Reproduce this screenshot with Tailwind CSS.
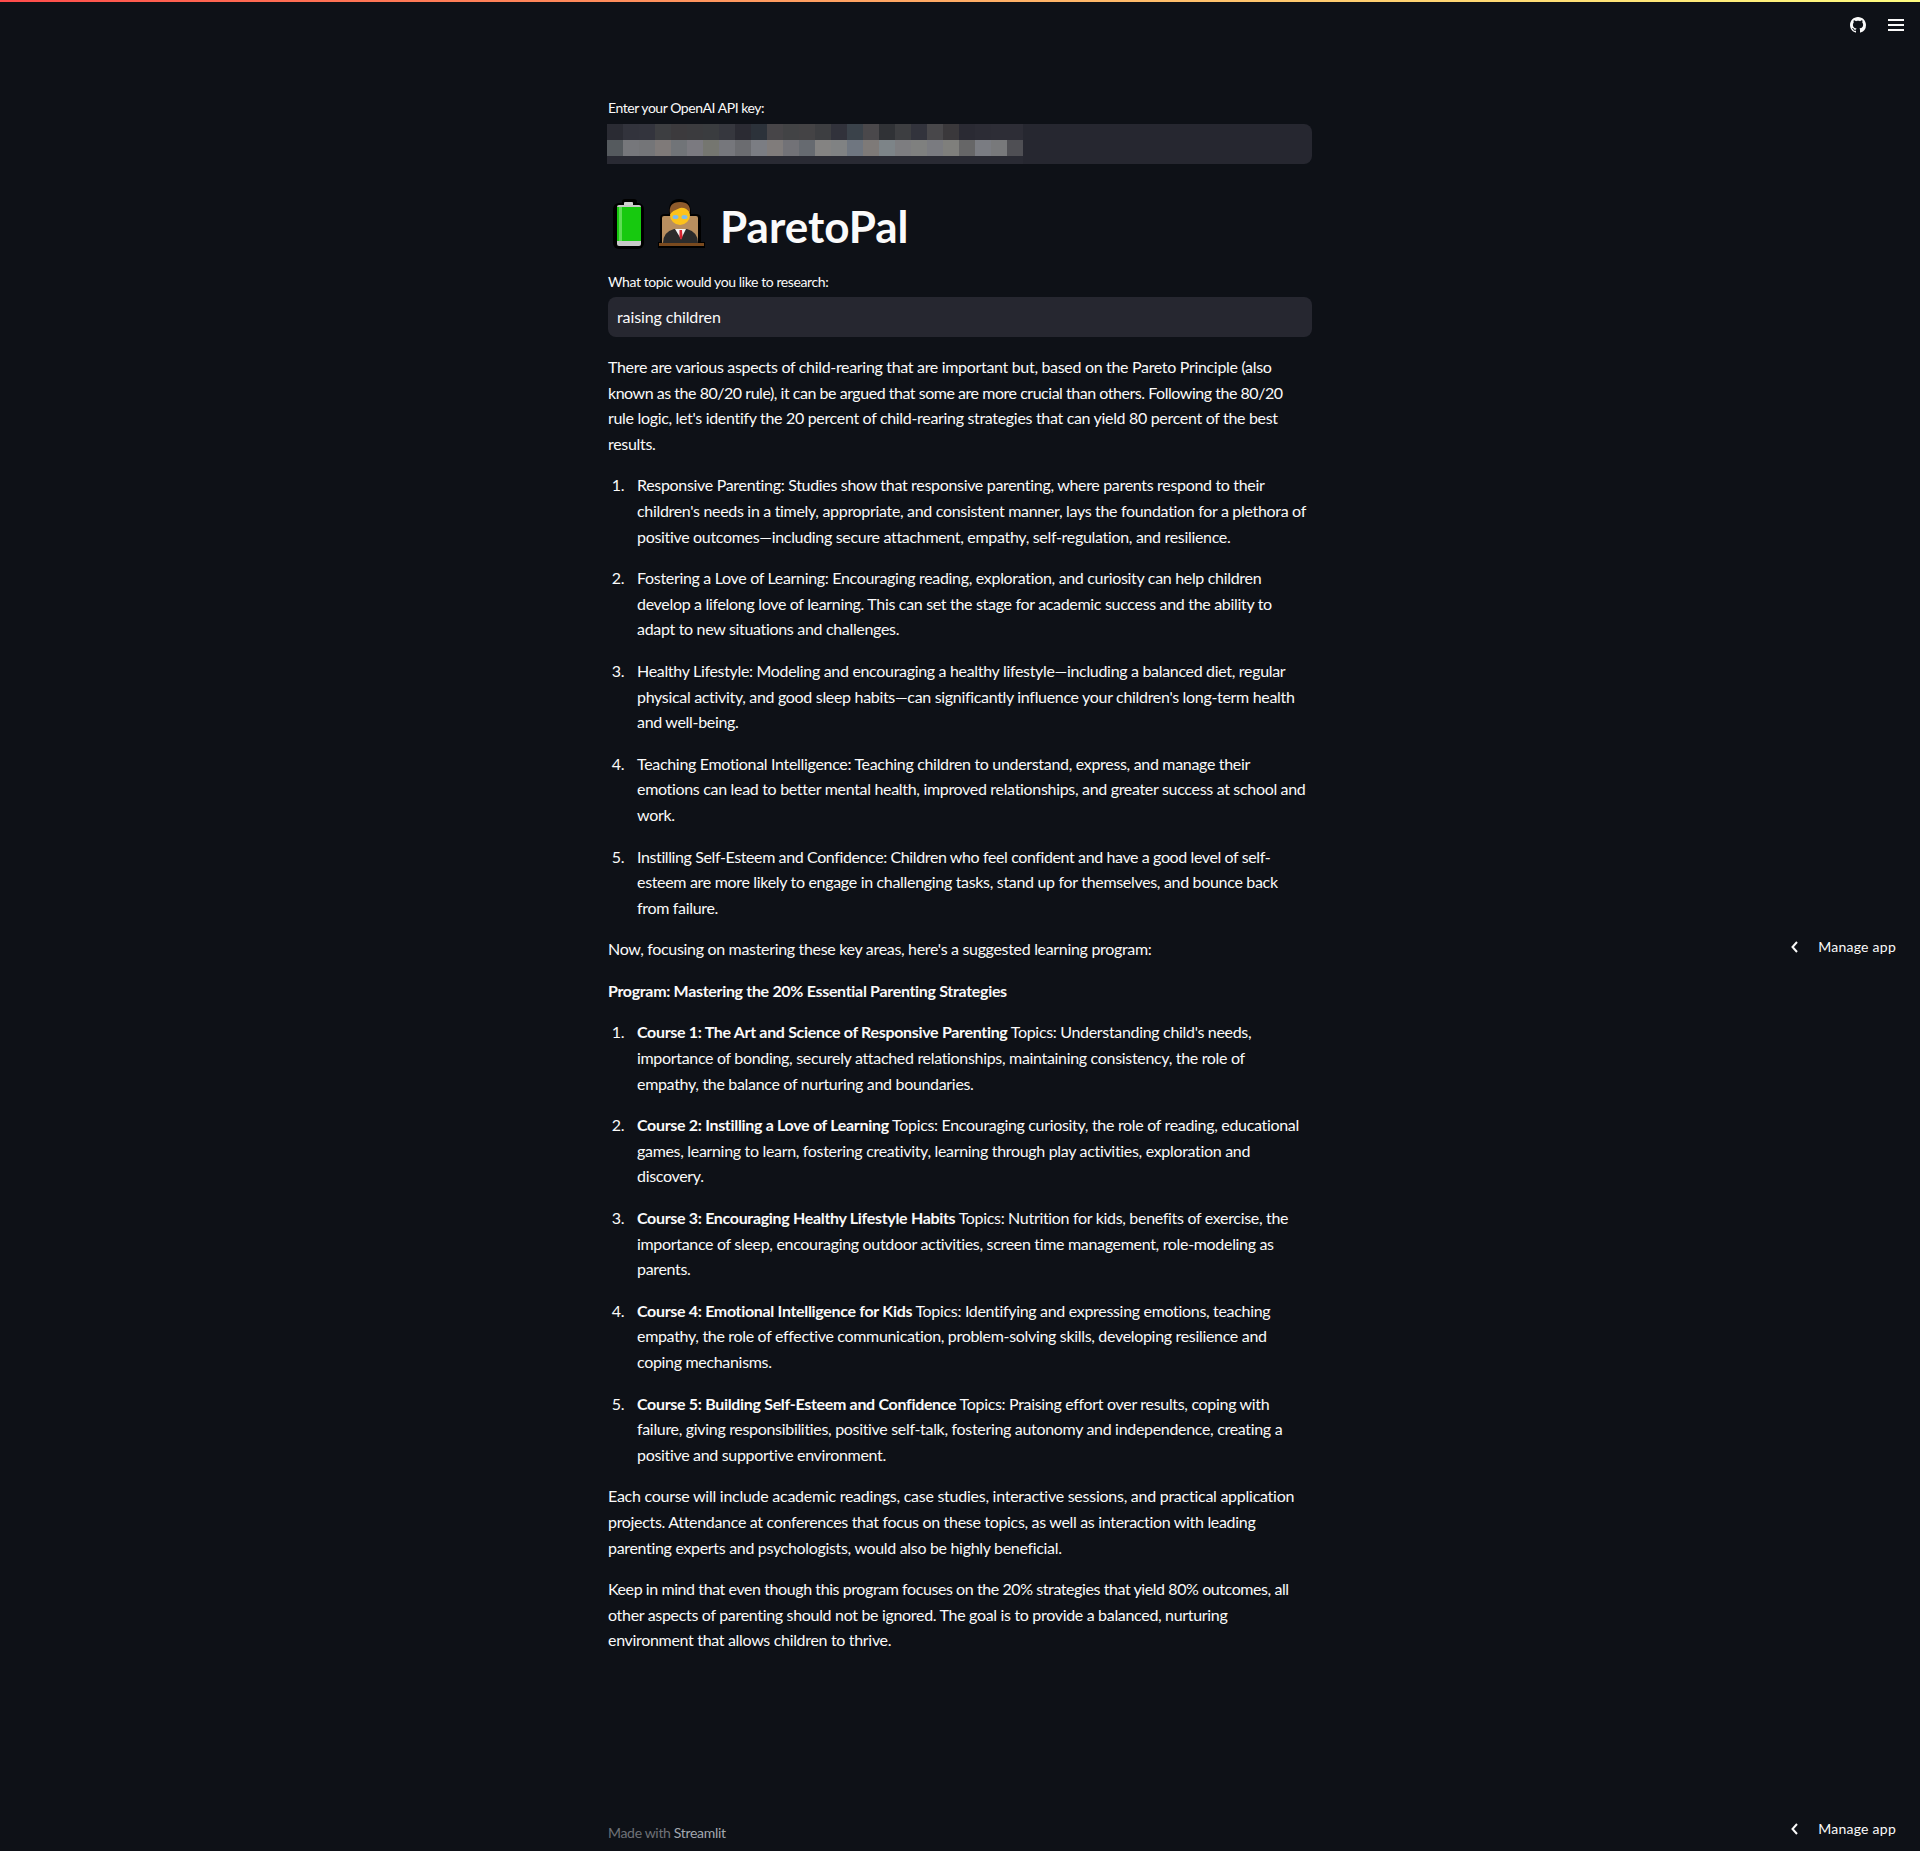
<!DOCTYPE html>
<html lang="en">
<head>
    <meta charset="UTF-8">
    <meta name="viewport" content="width=device-width, initial-scale=1.0">
    <title>ParetoPal</title>
    <script src="https://cdn.jsdelivr.net/npm/@tailwindcss/browser@4"></script>
</head>
<body class="bg-[#0e1117] text-[#fafafa] font-['Lato',sans-serif] h-[1851px] overflow-hidden relative">
    <!-- Top bar -->
    <div class="h-0.5 bg-gradient-to-r from-[#ff4b4b] to-[#fffd80]"></div>
    <div class="absolute top-[17px] right-[16px] flex items-center gap-[22px]">
        <svg class="w-4 h-4" viewBox="0 0 16 16" fill="#fafafa"><path d="M8 0C3.58 0 0 3.58 0 8c0 3.54 2.29 6.53 5.47 7.59.4.07.55-.17.55-.38 0-.19-.01-.82-.01-1.49-2.01.37-2.53-.49-2.69-.94-.09-.23-.48-.94-.82-1.13-.28-.15-.68-.52-.01-.53.63-.01 1.08.58 1.23.82.72 1.21 1.87.87 2.33.66.07-.52.28-.87.51-1.07-1.78-.2-3.64-.89-3.64-3.95 0-.87.31-1.59.82-2.15-.08-.2-.36-1.02.08-2.12 0 0 .67-.21 2.2.82.64-.18 1.32-.27 2-.27s1.36.09 2 .27c1.53-1.04 2.2-.82 2.2-.82.44 1.1.16 1.92.08 2.12.51.56.82 1.27.82 2.15 0 3.07-1.87 3.75-3.65 3.95.29.25.54.73.54 1.48 0 1.07-.01 1.93-.01 2.2 0 .21.15.46.55.38A8.01 8.01 0 0016 8c0-4.42-3.58-8-8-8z"/></svg>
        <div class="w-4 flex flex-col gap-[3px]">
            <div class="h-0.5 bg-[#fafafa]"></div>
            <div class="h-0.5 bg-[#fafafa]"></div>
            <div class="h-0.5 bg-[#fafafa]"></div>
        </div>
    </div>

    <!-- Manage app buttons -->
    <div class="absolute top-[937px] right-6 flex items-center gap-[15px] text-sm leading-5 tracking-[0.25px]">
        <svg class="w-[16px] h-[16px]" viewBox="0 0 16 16" fill="none" stroke="#fafafa" stroke-width="2"><path d="M10 3 L5.5 8 L10 13"/></svg>
        <span>Manage app</span>
    </div>
    <div class="absolute top-[1819px] right-6 flex items-center gap-[15px] text-sm leading-5 tracking-[0.25px]">
        <svg class="w-[16px] h-[16px]" viewBox="0 0 16 16" fill="none" stroke="#fafafa" stroke-width="2"><path d="M10 3 L5.5 8 L10 13"/></svg>
        <span>Manage app</span>
    </div>

    <main class="w-[704px] ml-[608px] pt-[96px]">
        <label class="block text-sm leading-[20px] h-[26px] tracking-[-0.45px]">Enter your OpenAI API key:</label>
        <div class="h-10 rounded-lg bg-[#262730] relative">
            <!-- pixelated key -->
            <div class="absolute top-0 left-[-1px] grid grid-cols-[repeat(26,16px)] grid-rows-[16px_16px_8px]">
                <div class="bg-[#2a2b33]"></div><div class="bg-[#32333c]"></div><div class="bg-[#33343d]"></div><div class="bg-[#3d3e41]"></div><div class="bg-[#3c3a3d]"></div><div class="bg-[#3b3b3e]"></div><div class="bg-[#3a3c3f]"></div><div class="bg-[#36373e]"></div><div class="bg-[#2b2b33]"></div><div class="bg-[#2c323a]"></div><div class="bg-[#474548]"></div><div class="bg-[#424345]"></div><div class="bg-[#444345]"></div><div class="bg-[#3d3e41]"></div><div class="bg-[#31323b]"></div><div class="bg-[#3a424a]"></div><div class="bg-[#4a484b]"></div><div class="bg-[#303236]"></div><div class="bg-[#3d3e41]"></div><div class="bg-[#32333c]"></div><div class="bg-[#48474a]"></div><div class="bg-[#3a383b]"></div><div class="bg-[#2a2a33]"></div><div class="bg-[#2c2c35]"></div><div class="bg-[#2d2d36]"></div><div class="bg-[#2d2d36]"></div>
                <div class="bg-[#555a5e]"></div><div class="bg-[#76777b]"></div><div class="bg-[#747578]"></div><div class="bg-[#7f7a79]"></div><div class="bg-[#717478]"></div><div class="bg-[#7b7a80]"></div><div class="bg-[#757670]"></div><div class="bg-[#76777c]"></div><div class="bg-[#6b6c70]"></div><div class="bg-[#7b7d83]"></div><div class="bg-[#807c7b]"></div><div class="bg-[#727277]"></div><div class="bg-[#666a70]"></div><div class="bg-[#848382]"></div><div class="bg-[#808283]"></div><div class="bg-[#6f7680]"></div><div class="bg-[#7e7a78]"></div><div class="bg-[#7d8488]"></div><div class="bg-[#7d7d80]"></div><div class="bg-[#7f807f]"></div><div class="bg-[#7a7b80]"></div><div class="bg-[#7f7f7c]"></div><div class="bg-[#666667]"></div><div class="bg-[#7a7c82]"></div><div class="bg-[#78797b]"></div><div class="bg-[#4f4f54]"></div>
                <div class="col-span-full bg-[#292a33]"></div>
            </div>
        </div>

        <h1 class="flex items-center h-[64px] mt-[28px] text-[44px] font-bold pl-1">
            <!-- battery emoji -->
            <svg class="w-8 h-[50px] shrink-0" viewBox="0 0 32 50">
                <rect x="1" y="4" width="31" height="46" rx="6" fill="#000"/>
                <rect x="10" y="0" width="15" height="8" rx="3" fill="#000"/>
                <rect x="12" y="3" width="9" height="4" rx="1" fill="#d0d0d0"/>
                <rect x="5" y="6" width="24" height="41" rx="2" fill="#c8c8c8"/>
                <rect x="5" y="8" width="24" height="34" fill="#17c90f"/>
                <rect x="7" y="8" width="3" height="34" fill="#5fdc55"/>
            </svg>
            <!-- judge emoji -->
            <svg class="w-[50px] h-[50px] shrink-0 ml-3" viewBox="0 0 50 50">
                <path d="M2 49 L2 43 L4 43 L4 19 Q4 15 9 15 L13 15 Q12 0 23 0 Q35 0 35 15 L39 15 Q45 15 45 19 L45 43 L49 43 L49 49 Z" fill="#000"/>
                <rect x="6" y="17" width="36" height="28" rx="2" fill="#b98f5f"/>
                <path d="M7 44 Q7 33 18 30 L31 30 Q42 33 42 44 Z" fill="#2b2b2b"/>
                <path d="M19 30 L30 30 L25 40 Z" fill="#f5f5f5"/>
                <path d="M23.5 31 L26 31 L26.5 38 L25 41 L23.5 38 Z" fill="#d8232f"/>
                <circle cx="24" cy="16" r="10" fill="#fcc21b"/>
                <path d="M14 15 Q12 3 24 3 Q35 3 34 14 Q30 8 24 9 Q18 11 14 15 Z" fill="#8e5a2b"/>
                <ellipse cx="19.5" cy="18" rx="3" ry="2" fill="#7fbde8"/>
                <ellipse cx="28.5" cy="18" rx="3" ry="2" fill="#7fbde8"/>
                <rect x="3" y="44" width="45" height="3" fill="#7a4a1e"/>
            </svg>
            <span class="ml-[14px] pt-1">ParetoPal</span>
        </h1>

        <label class="block mt-[16px] text-sm leading-[20px] h-[25px] tracking-[-0.4px]">What topic would you like to research:</label>
        <div class="h-10 rounded-lg bg-[#262730] px-[9px] flex items-center tracking-[-0.12px]">raising children</div>

        <!-- Response -->
        <div class="mt-[17px] text-base leading-[25.6px] whitespace-nowrap space-y-4 tracking-[-0.32px]">
            <p>There are various aspects of child-rearing that are important but, based on the Pareto Principle (also<br><span class="tracking-[-0.47px]">known as the 80/20 rule), it can be argued that some are more crucial than others. Following the 80/20</span><br>rule logic, let's identify the 20 percent of child-rearing strategies that can yield 80 percent of the best<br>results.</p>
            <ol class="list-decimal pl-5 space-y-4 *:pl-[9px]">
                <li>Responsive Parenting: Studies show that responsive parenting, where parents respond to their<br>children's needs in a timely, appropriate, and consistent manner, lays the foundation for a plethora of<br>positive outcomes—including secure attachment, empathy, self-regulation, and resilience.</li>
                <li>Fostering a Love of Learning: Encouraging reading, exploration, and curiosity can help children<br>develop a lifelong love of learning. This can set the stage for academic success and the ability to<br>adapt to new situations and challenges.</li>
                <li>Healthy Lifestyle: Modeling and encouraging a healthy lifestyle—including a balanced diet, regular<br>physical activity, and good sleep habits—can significantly influence your children's long-term health<br>and well-being.</li>
                <li>Teaching Emotional Intelligence: Teaching children to understand, express, and manage their<br>emotions can lead to better mental health, improved relationships, and greater success at school and<br>work.</li>
                <li><span class="tracking-[-0.39px]">Instilling Self-Esteem and Confidence: Children who feel confident and have a good level of self-</span><br>esteem are more likely to engage in challenging tasks, stand up for themselves, and bounce back<br>from failure.</li>
            </ol>
            <p>Now, focusing on mastering these key areas, here's a suggested learning program:</p>
            <p class="font-bold">Program: Mastering the 20% Essential Parenting Strategies</p>
            <ol class="list-decimal pl-5 space-y-4 *:pl-[9px]">
                <li><strong>Course 1: The Art and Science of Responsive Parenting</strong> Topics: Understanding child's needs,<br>importance of bonding, securely attached relationships, maintaining consistency, the role of<br>empathy, the balance of nurturing and boundaries.</li>
                <li><strong>Course 2: Instilling a Love of Learning</strong> Topics: Encouraging curiosity, the role of reading, educational<br>games, learning to learn, fostering creativity, learning through play activities, exploration and<br>discovery.</li>
                <li><strong>Course 3: Encouraging Healthy Lifestyle Habits</strong> Topics: Nutrition for kids, benefits of exercise, the<br>importance of sleep, encouraging outdoor activities, screen time management, role-modeling as<br>parents.</li>
                <li><strong>Course 4: Emotional Intelligence for Kids</strong> Topics: Identifying and expressing emotions, teaching<br>empathy, the role of effective communication, problem-solving skills, developing resilience and<br>coping mechanisms.</li>
                <li><strong>Course 5: Building Self-Esteem and Confidence</strong> Topics: Praising effort over results, coping with<br>failure, giving responsibilities, positive self-talk, fostering autonomy and independence, creating a<br>positive and supportive environment.</li>
            </ol>
            <p><span class="tracking-[-0.26px]">Each course will include academic readings, case studies, interactive sessions, and practical application</span><br>projects. Attendance at conferences that focus on these topics, as well as interaction with leading<br>parenting experts and psychologists, would also be highly beneficial.</p>
            <p><span class="tracking-[-0.42px]">Keep in mind that even though this program focuses on the 20% strategies that yield 80% outcomes, all</span><br>other aspects of parenting should not be ignored. The goal is to provide a balanced, nurturing<br>environment that allows children to thrive.</p>
        </div>
    </main>

    <!-- Footer -->
    <footer class="absolute top-[1823px] left-[608px] text-sm leading-5 tracking-[-0.32px] text-[#6f7278]">Made with <span class="text-[#a3a8b0]">Streamlit</span></footer>
</body>
</html>
